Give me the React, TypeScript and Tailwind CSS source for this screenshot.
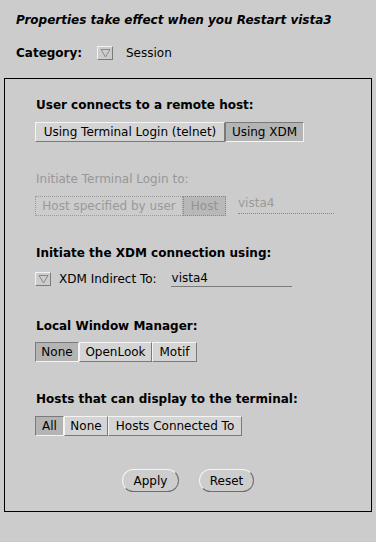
import React from "react";

const font = { fontFamily: '"DejaVu Sans", "Liberation Sans", sans-serif' };

function TriButton({ className = "" }: { className?: string }) {
  return (
    <div
      className={`w-[16px] h-[14px] flex items-center justify-center border border-t-[#f2f2f2] border-l-[#f2f2f2] border-r-[#7a7a7a] border-b-[#7a7a7a] ${className}`}
    >
      <svg width="11" height="10" viewBox="0 0 11 10">
        <path d="M1 1.5 L10 1.5 L5.5 9 Z" fill="none" stroke="#8a8a8a" strokeWidth="1" />
      </svg>
    </div>
  );
}

function Seg({
  items,
  selected,
  disabled = false,
}: {
  items: { label: string; w: number }[];
  selected: number;
  disabled?: boolean;
}) {
  return (
    <div className="flex h-[20px]">
      {items.map((it, i) => {
        const on = i === selected;
        let cls = "";
        if (disabled) {
          cls = on
            ? "bg-[#b8b8b8] border border-dotted border-[#8a8a8a] text-[#939393]"
            : "bg-[#cccccc] border border-dotted border-[#9a9a9a] text-[#9a9a9a]";
        } else {
          cls = on
            ? "bg-[#b4b4b4] border border-t-[#7a7a7a] border-l-[#7a7a7a] border-r-[#f4f4f4] border-b-[#f4f4f4] text-black"
            : "bg-[#d4d4d4] border border-t-[#f4f4f4] border-l-[#f4f4f4] border-r-[#7a7a7a] border-b-[#7a7a7a] text-black";
        }
        return (
          <div
            key={it.label}
            style={{ width: it.w }}
            className={`flex items-center justify-center text-[12px] leading-none ${cls}`}
          >
            {it.label}
          </div>
        );
      })}
    </div>
  );
}

function Heading({ children, disabled = false }: { children: React.ReactNode; disabled?: boolean }) {
  return (
    <div
      className={`h-[16px] flex items-center pl-[1px] text-[12px] ${
        disabled ? "text-[#979797] font-normal" : "text-black font-bold"
      }`}
    >
      {children}
    </div>
  );
}

function Pill({ label, w }: { label: string; w: number }) {
  return (
    <div
      style={{ width: w }}
      className="h-[23px] rounded-full border border-t-[#f4f4f4] border-l-[#f4f4f4] border-r-[#6e6e6e] border-b-[#6e6e6e] bg-[#cdcdcd] flex items-center justify-center text-[12px] text-black"
    >
      {label}
    </div>
  );
}

export default function App() {
  return (
    <div className="w-[376px] h-[542px] bg-[#cccccc] overflow-hidden" style={font}>
      {/* Title */}
      <div className="pt-[12px] pl-[16px] h-[30px] text-[12px] font-bold italic text-black leading-[16px]">
        Properties take effect when you Restart vista3
      </div>

      {/* Category */}
      <div className="flex items-center h-[16px] mt-[15px] pl-[16px]">
        <span className="text-[12px] font-bold w-[81px]">Category:</span>
        <TriButton />
        <span className="ml-[13px] text-[12px]">Session</span>
      </div>

      {/* Panel */}
      <div className="mt-[17px] mx-[4px] h-[434px] border border-black pl-[30px] pt-[18px]">
        <Heading>User connects to a remote host:</Heading>
        <div className="mt-[9px]">
          <Seg
            items={[
              { label: "Using Terminal Login (telnet)", w: 190 },
              { label: "Using XDM", w: 79 },
            ]}
            selected={1}
          />
        </div>

        <div className="mt-[29px]">
          <Heading disabled>Initiate Terminal Login to:</Heading>
        </div>
        <div className="mt-[9px] flex items-start">
          <Seg
            items={[
              { label: "Host specified by user", w: 148 },
              { label: "Host", w: 43 },
            ]}
            selected={1}
            disabled
          />
          <div className="ml-[12px] w-[96px] h-[18px] border-b border-dotted border-[#8a8a8a] text-[12px] text-[#9a9a9a] leading-[14px]">
            vista4
          </div>
        </div>

        <div className="mt-[29px]">
          <Heading>Initiate the XDM connection using:</Heading>
        </div>
        <div className="mt-[10px] flex items-center h-[16px]">
          <TriButton />
          <span className="ml-[8px] text-[12px]">XDM Indirect To:</span>
          <div className="ml-[14px] w-[121px] h-[16px] border-b border-[#7a7a7a] text-[12px] leading-[14px] pl-[1px]">
            vista4
          </div>
        </div>

        <div className="mt-[31px]">
          <Heading>Local Window Manager:</Heading>
        </div>
        <div className="mt-[8px]">
          <Seg
            items={[
              { label: "None", w: 44 },
              { label: "OpenLook", w: 73 },
              { label: "Motif", w: 45 },
            ]}
            selected={0}
          />
        </div>

        <div className="mt-[29px]">
          <Heading>Hosts that can display to the terminal:</Heading>
        </div>
        <div className="mt-[9px]">
          <Seg
            items={[
              { label: "All", w: 29 },
              { label: "None", w: 44 },
              { label: "Hosts Connected To", w: 134 },
            ]}
            selected={0}
          />
        </div>

        <div className="mt-[33px] flex pl-[87px] gap-[20px]">
          <Pill label="Apply" w={57} />
          <Pill label="Reset" w={55} />
        </div>
      </div>
    </div>
  );
}
